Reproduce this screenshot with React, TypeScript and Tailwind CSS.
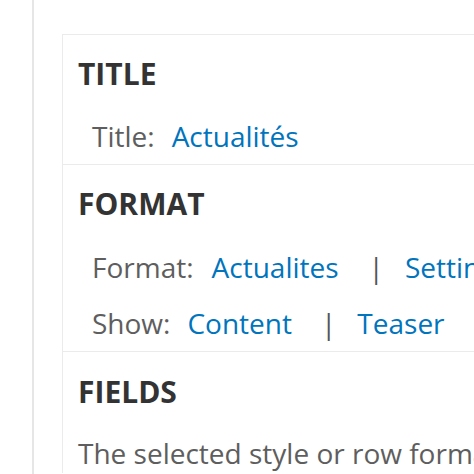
export default function App() {
  const font = { fontFamily: '"Open Sans", "Liberation Sans", sans-serif' };
  return (
    <div className="w-[474px] h-[474px] overflow-hidden bg-white" style={font}>
      <div className="ml-[32px] h-full border-l-2 border-[#e6e6e6] pl-[28px] pt-[34px]">
        <div className="w-[600px] border-l border-t border-[#ebebeb] text-[28px] leading-[40px]">
          <section className="border-b border-[#ebebeb] pl-[15px] pt-[19px] pb-[8px]">
            <h2 className="text-[30px] font-bold text-[#333] mb-[22px]">TITLE</h2>
            <div className="pl-[14px] whitespace-nowrap">
              <span className="text-[#5e5e5e]">Title:</span>
              <a className="ml-[17px] text-[#0074bd]">Actualités</a>
            </div>
          </section>
          <section className="border-b border-[#ebebeb] pl-[15px] pt-[19px] pb-[8px]">
            <h2 className="text-[30px] font-bold text-[#333] mb-[23px]">FORMAT</h2>
            <div className="flex flex-col gap-[16px] pl-[14px] whitespace-nowrap">
              <div>
                <span className="text-[#5e5e5e]">Format:</span>
                <a className="ml-[18px] text-[#0074bd]">Actualites</a>
                <span className="ml-[30px] mr-[21px] text-[#555]">|</span>
                <a className="text-[#0074bd]">Settings</a>
              </div>
              <div>
                <span className="text-[#5e5e5e]">Show:</span>
                <a className="ml-[17px] text-[#0074bd]">Content</a>
                <span className="ml-[29px] mr-[21px] text-[#555]">|</span>
                <a className="text-[#0074bd]">Teaser</a>
              </div>
            </div>
          </section>
          <section className="pl-[15px] pt-[20px]">
            <h2 className="text-[30px] font-bold text-[#333] mb-[21px]">FIELDS</h2>
            <p className="text-[#5e5e5e] whitespace-nowrap">
              The selected style or row format does not use fields.
            </p>
          </section>
        </div>
      </div>
    </div>
  );
}
